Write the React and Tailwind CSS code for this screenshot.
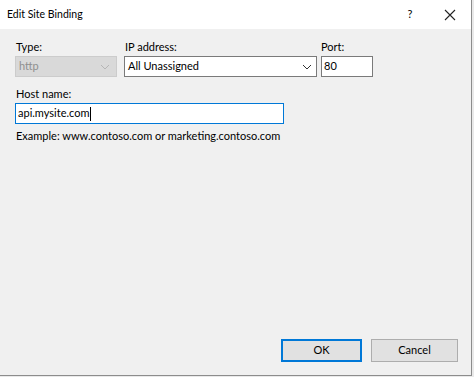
import React from "react";

function Chevron({ color = "#333" }) {
  return (
    <svg width="10" height="6" viewBox="0 0 10 6" fill="none">
      <path d="M1 1l4 4 4-4" stroke={color} strokeWidth="1" />
    </svg>
  );
}

export default function App() {
  return (
    <div
      className="w-[474px] h-[377px] bg-[#e9e9e9] overflow-hidden text-[11px] text-[#000]"
      style={{ fontFamily: 'Lato, "Noto Sans", sans-serif' }}
    >
      <div className="w-[472px] h-[376px] flex flex-col border-r border-b border-[#8c8c8c] bg-[#f0f0f0]">
        {/* title bar */}
        <div className="h-[29px] bg-white flex items-center pl-[7px] shrink-0 text-[10.5px]">
          <span className="flex-1">Edit Site Binding</span>
          <span className="w-[20px] text-center mr-[20px] text-[11px]">?</span>
          <span className="w-[20px] flex justify-center mr-[11px]">
            <svg width="12" height="12" viewBox="0 0 12 12">
              <path d="M1 1l10 10M11 1L1 11" stroke="#222" strokeWidth="1.1" />
            </svg>
          </span>
        </div>

        {/* body */}
        <div className="flex-1 flex flex-col pl-[15px] pt-[10px]">
          <div className="flex">
            <div className="w-[102px] flex flex-col">
              <span className="pl-[1px] leading-[15px] mb-[2px]">Type:</span>
              <div className="h-[21px] bg-[#d9d9d9] border border-[#cccccc] flex items-center justify-between pl-[3px] pr-[6px] text-[#8f8f8f]">
                <span>http</span>
                <Chevron color="#b5b5b5" />
              </div>
            </div>
            <div className="w-[193px] ml-[7px] flex flex-col">
              <span className="pl-[1px] leading-[15px] mb-[2px]">IP address:</span>
              <div className="h-[21px] bg-white border border-[#7a7a7a] flex items-center justify-between pl-[3px] pr-[4px]">
                <span>All Unassigned</span>
                <Chevron />
              </div>
            </div>
            <div className="w-[52px] ml-[4px] flex flex-col">
              <span className="leading-[15px] mb-[2px]">Port:</span>
              <div className="h-[21px] bg-white border border-[#7a7a7a] flex items-center pl-[2px]">
                <span>80</span>
              </div>
            </div>
          </div>

          <span className="pl-[1px] leading-[15px] mt-[9px] mb-[2px]">Host name:</span>
          <div className="w-[269px] h-[21px] bg-white border border-[#0078d7] flex items-center pl-[2px]">
            <span>api.mysite.com</span>
            <span className="w-px h-[14px] bg-black" />
          </div>
          <span className="pl-[1px] leading-[15px] mt-[4px]">
            Example: www.contoso.com or marketing.contoso.com
          </span>

          <div className="flex-1" />
          <div className="flex justify-end pr-[13px] mb-[13px] gap-[9px]">
            <div className="w-[81px] h-[23px] bg-[#e1e1e1] border-2 border-[#0078d7] flex items-center justify-center">
              OK
            </div>
            <div className="w-[87px] h-[23px] bg-[#e1e1e1] border border-[#adadad] flex items-center justify-center">
              Cancel
            </div>
          </div>
        </div>
      </div>
    </div>
  );
}
